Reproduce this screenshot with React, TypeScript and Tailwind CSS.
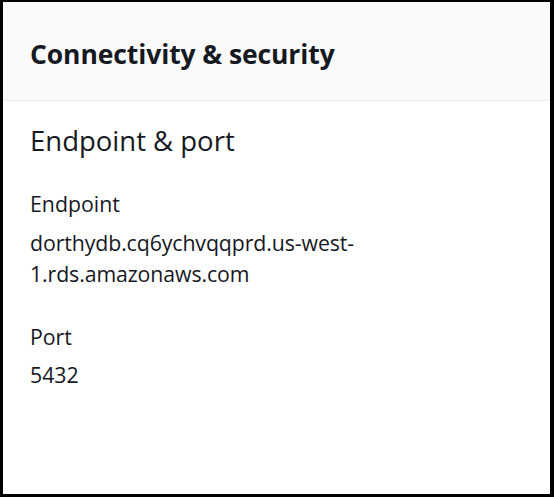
export default function App() {
  return (
    <div className="w-[554px] h-[497px] bg-white">
      <div
        className="w-full h-full border-t-[2px] border-l-[3px] border-r-[4px] border-b-[3px] border-black flex flex-col text-[#16191f]"
        style={{ fontFamily: '"Open Sans", "Noto Sans", sans-serif' }}
      >
        <div className="h-[99px] bg-[#fafafa] border-b border-[#eaeded] flex items-center pl-[27px] pt-[7px]">
          <h2 className="text-[26.5px] font-bold leading-none tracking-[-0.1px]">Connectivity &amp; security</h2>
        </div>
        <div className="pl-[27px] pt-[22px]">
          <h3 className="text-[27.5px] leading-[36px] font-normal">Endpoint &amp; port</h3>
          <div className="mt-[31px] text-[21.3px] leading-[28px]">
            <div>Endpoint</div>
            <div className="mt-[9px] w-[360px] leading-[31px] tracking-[-0.1px]">dorthydb.cq6ychvqqprd.us-west-<br />1.rds.amazonaws.com</div>
          </div>
          <div className="mt-[34px] text-[21.3px] leading-[28px]">
            <div>Port</div>
            <div className="mt-[10px]">5432</div>
          </div>
        </div>
      </div>
    </div>
  );
}
